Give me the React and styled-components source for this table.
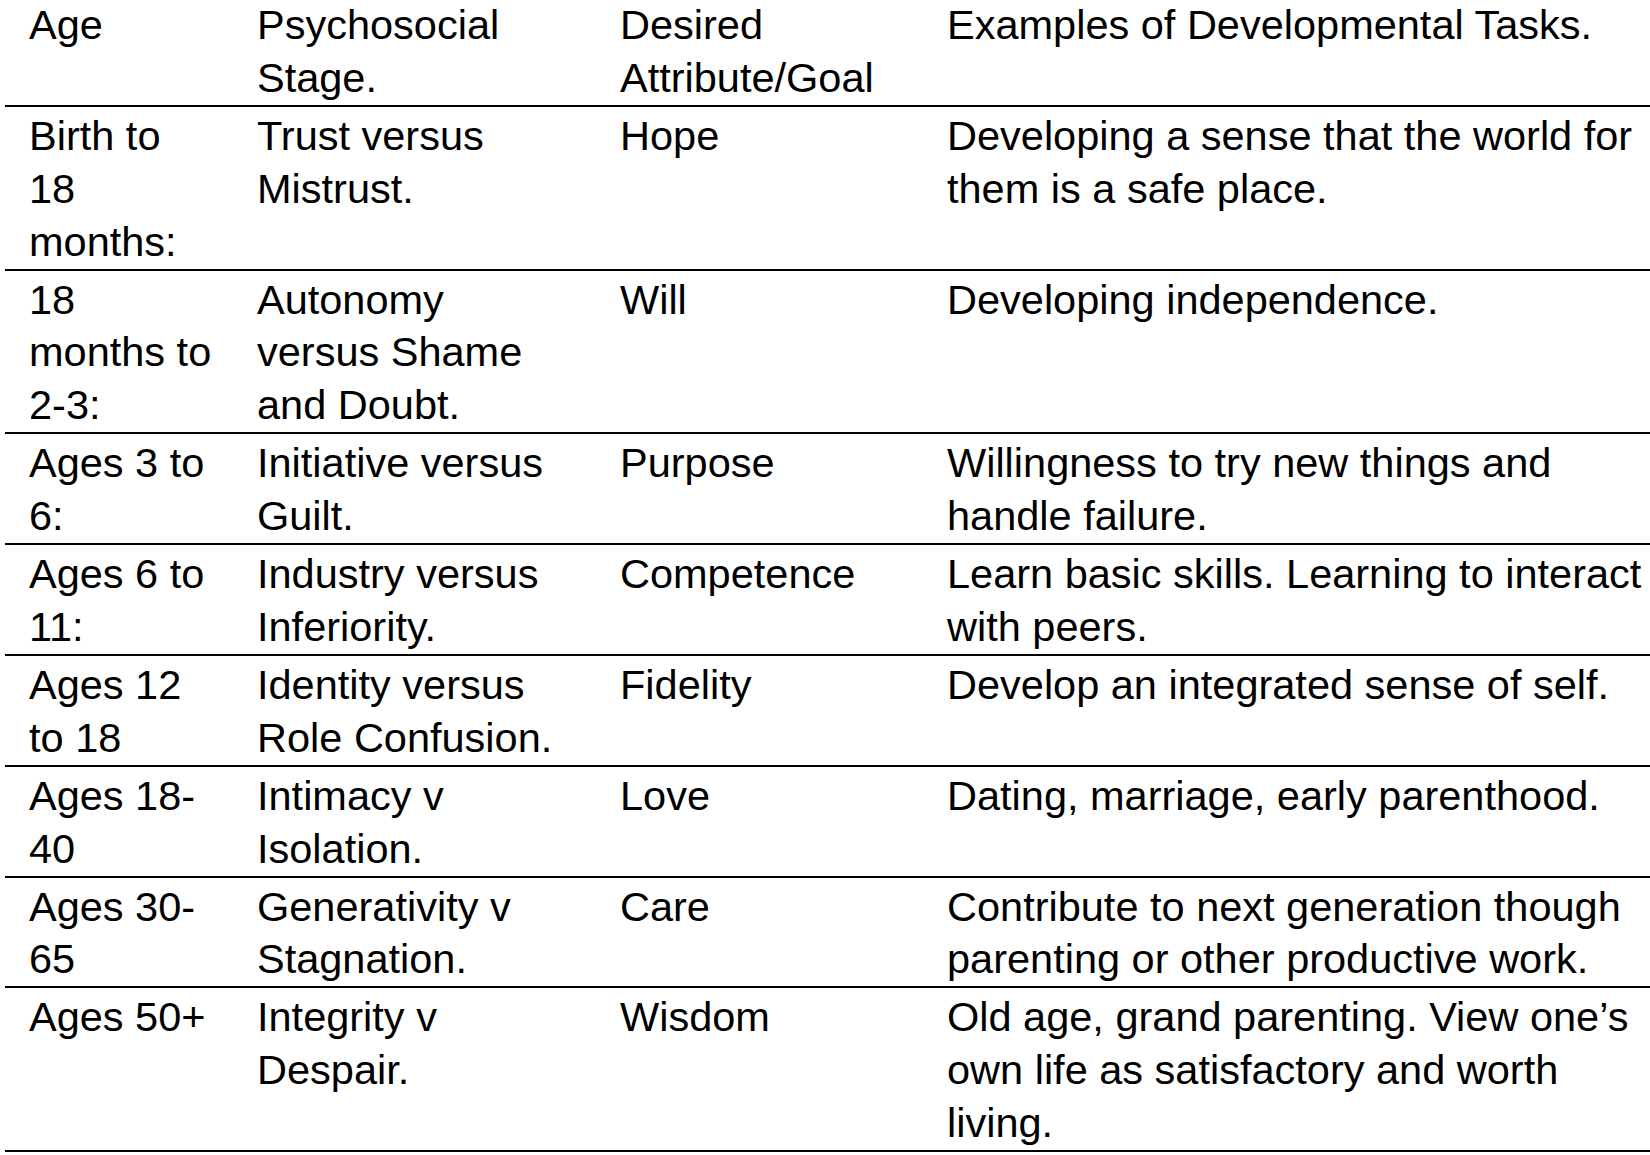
import React from "react";
import styled, { createGlobalStyle } from "styled-components";

const GlobalStyle = createGlobalStyle`
  html, body {
    margin: 0;
    padding: 0;
    background: #fff;
    overflow: hidden;
  }
  body {
    font-family: "Liberation Sans", Arial, Helvetica, sans-serif;
    color: #000;
  }
`;

const rows = [
  {
    age: ["Birth to", "18", "months:"],
    stage: ["Trust versus", "Mistrust."],
    goal: ["Hope"],
    tasks: ["Developing a sense that the world for", "them is a safe place."],
  },
  {
    age: ["18", "months to", "2-3:"],
    stage: ["Autonomy", "versus Shame", "and Doubt."],
    goal: ["Will"],
    tasks: ["Developing independence."],
  },
  {
    age: ["Ages 3 to", "6:"],
    stage: ["Initiative versus", "Guilt."],
    goal: ["Purpose"],
    tasks: ["Willingness to try new things and", "handle failure."],
  },
  {
    age: ["Ages 6 to", "11:"],
    stage: ["Industry versus", "Inferiority."],
    goal: ["Competence"],
    tasks: ["Learn basic skills. Learning to interact", "with peers."],
  },
  {
    age: ["Ages 12", "to 18"],
    stage: ["Identity versus", "Role Confusion."],
    goal: ["Fidelity"],
    tasks: ["Develop an integrated sense of self."],
  },
  {
    age: ["Ages 18-", "40"],
    stage: ["Intimacy v", "Isolation."],
    goal: ["Love"],
    tasks: ["Dating, marriage, early parenthood."],
  },
  {
    age: ["Ages 30-", "65"],
    stage: ["Generativity v", "Stagnation."],
    goal: ["Care"],
    tasks: [
      "Contribute to next generation though",
      "parenting or other productive work.",
    ],
  },
  {
    age: ["Ages 50+"],
    stage: ["Integrity v", "Despair."],
    goal: ["Wisdom"],
    tasks: [
      "Old age, grand parenting. View one\u2019s",
      "own life as satisfactory and worth",
      "living.",
    ],
  },
];

const header = {
  age: ["Age"],
  stage: ["Psychosocial", "Stage."],
  goal: ["Desired", "Attribute/Goal"],
  tasks: ["Examples of Developmental Tasks."],
};

const App = () => {
  return (
    <>
      <GlobalStyle />
      <Table>
        <TableRow $head>
          <StageCells data={header} />
        </TableRow>
        {rows.map((row, i) => (
          <TableRow key={i}>
            <StageCells data={row} />
          </TableRow>
        ))}
      </Table>
    </>
  );
};

const StageCells = ({ data }) => (
  <>
    {["age", "stage", "goal", "tasks"].map((key) => (
      <Cell key={key}>
        {data[key].map((line, j) => (
          <Line key={j}>{line}</Line>
        ))}
      </Cell>
    ))}
  </>
);

export default App;

const Table = styled.div`
  margin: -2px 0 0 5px;
  width: calc(100% - 5px);
  display: flex;
  flex-direction: column;
`;

const TableRow = styled.div`
  display: grid;
  grid-template-columns: 228px 363px 327px 1fr;
  padding-top: ${(p) => (p.$head ? "1px" : "3px")};
  border-bottom: 2px solid #000;
`;

const Cell = styled.div`
  padding-left: 24px;
  font-size: 41.5px;
  line-height: 52.9px;
`;

const Line = styled.span`
  display: block;
  white-space: nowrap;
`;
